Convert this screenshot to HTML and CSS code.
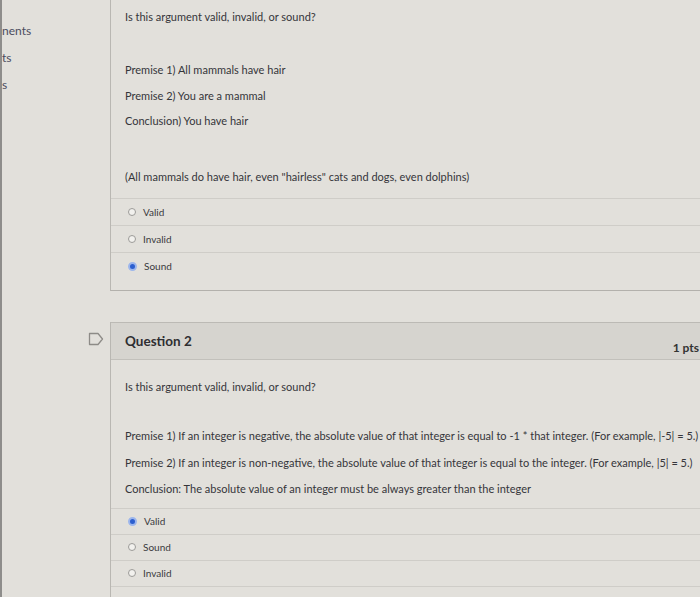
FILE: index.html
```html
<!DOCTYPE html>
<html>
<head>
<meta charset="utf-8">
<link rel="stylesheet" href="styles.css">
</head>
<body>
<div class="page">
  <nav class="sidebar">
    <div class="nav-item first">nents</div>
    <div class="nav-item">ts</div>
    <div class="nav-item">s</div>
  </nav>
  <main class="main">
    <div class="qrow">
      <div class="flag-slot"></div>
      <section class="card card-1">
        <div class="card-body">
          <p class="prompt">Is this argument valid, invalid, or sound?</p>
          <div class="premises">
            <p>Premise 1) All mammals have hair</p>
            <p>Premise 2) You are a mammal</p>
            <p>Conclusion) You have hair</p>
          </div>
          <p class="note">(All mammals do have hair, even "hairless" cats and dogs, even dolphins)</p>
        </div>
        <ul class="answers">
          <li><span class="radio"></span>Valid</li>
          <li><span class="radio"></span>Invalid</li>
          <li><span class="radio checked"></span>Sound</li>
        </ul>
      </section>
    </div>

    <div class="qrow q2">
      <div class="flag-slot">
        <svg class="flag" width="16" height="14" viewBox="0 0 16 14"><path d="M1.5 1.5h8.5l4.5 5.5-4.5 5.5h-8.5z" fill="none" stroke="#8d8b87" stroke-width="1.3" stroke-linejoin="round"/></svg>
      </div>
      <section class="card card-2">
        <header class="card-header">
          <h2>Question 2</h2>
          <span class="pts">1 pts</span>
        </header>
        <div class="card-body body-2">
          <p class="prompt">Is this argument valid, invalid, or sound?</p>
          <div class="premises p2">
            <p>Premise 1) If an integer is negative, the absolute value of that integer is equal to -1 * that integer. (For example, |-5| = 5.)</p>
            <p>Premise 2) If an integer is non-negative, the absolute value of that integer is equal to the integer. (For example, |5| = 5.)</p>
            <p>Conclusion: The absolute value of an integer must be always greater than the integer</p>
          </div>
        </div>
        <ul class="answers a2">
          <li><span class="radio checked"></span>Valid</li>
          <li><span class="radio"></span>Sound</li>
          <li><span class="radio"></span>Invalid</li>
        </ul>
      </section>
    </div>
  </main>
</div>
</body>
</html>
```

FILE: styles.css
```css
html, body {
  margin: 0;
  padding: 0;
  overflow: hidden;
  background: #e2e0db;
}
body {
  font-family: Lato, "Open Sans", sans-serif;
  color: #35353a;
  font-size: 11px;
}
p { margin: 0; }
.page {
  display: flex;
  width: 730px;
  height: 597px;
  border-left: 2px solid #8e8d8b;
}
.sidebar {
  width: 78px;
  flex: none;
  overflow: hidden;
  padding-top: 23px;
}
.nav-item {
  font-size: 12px;
  color: #4b4c5e;
  height: 27px;
  line-height: 16px;
  white-space: nowrap;
}
.main {
  flex: 1;
  display: flex;
  flex-direction: column;
}
.qrow {
  display: flex;
}
.flag-slot {
  width: 30px;
  flex: none;
  padding-left: 8px;
  box-sizing: border-box;
}
.card {
  flex: 1;
  border-left: 1px solid #b9b7b2;
}
.card-1 {
  border-bottom: 1px solid #b3b1ac;
  padding-bottom: 11px;
}
.card-body {
  padding: 10px 0 0 14px;
  line-height: 14px;
}
.premises {
  margin-top: 39px;
}
.premises p {
  margin-bottom: 11.5px;
}
.note {
  margin-top: 42px;
}
.answers {
  list-style: none;
  margin: 14px 0 0 0;
  padding: 0;
}
.answers li {
  display: flex;
  align-items: center;
  height: 26px;
  border-top: 1px solid #cfcdc8;
  padding-left: 17px;
  font-size: 10px;
  color: #3a3a3e;
}
.radio {
  width: 8px;
  height: 8px;
  border: 1px solid #9c9b98;
  border-radius: 50%;
  background: #f2f1ee;
  margin-right: 7px;
  box-sizing: border-box;
}
.radio.checked {
  border: 2.5px solid #9db6ec;
  background: #2c5fcf;
  width: 9px;
  height: 9px;
}
.q2 {
  margin-top: 31px;
  flex: 1;
}
.flag {
  margin-top: 10px;
}
.card-header {
  display: flex;
  justify-content: space-between;
  align-items: center;
  height: 36px;
  background: #d6d4cf;
  border-top: 1px solid #bcbab5;
  border-bottom: 1px solid #c2c0bb;
  padding: 0 33px 0 14px;
}
.card-header h2 {
  margin: 0;
  font-size: 13.5px;
  font-weight: 700;
  color: #2e2e32;
}
.pts {
  font-size: 12px;
  font-weight: 700;
  color: #333;
  margin-top: 12px;
}
.body-2 {
  padding-top: 20px;
}
.p2 {
  margin-top: 35px;
}
.p2 p {
  margin-bottom: 12.5px;
}
.a2 {
  margin-top: -1px;
}
.a2 li {
  height: 25px;
}
.a2 li:last-child {
  border-bottom: 1px solid #cfcdc8;
}
```
